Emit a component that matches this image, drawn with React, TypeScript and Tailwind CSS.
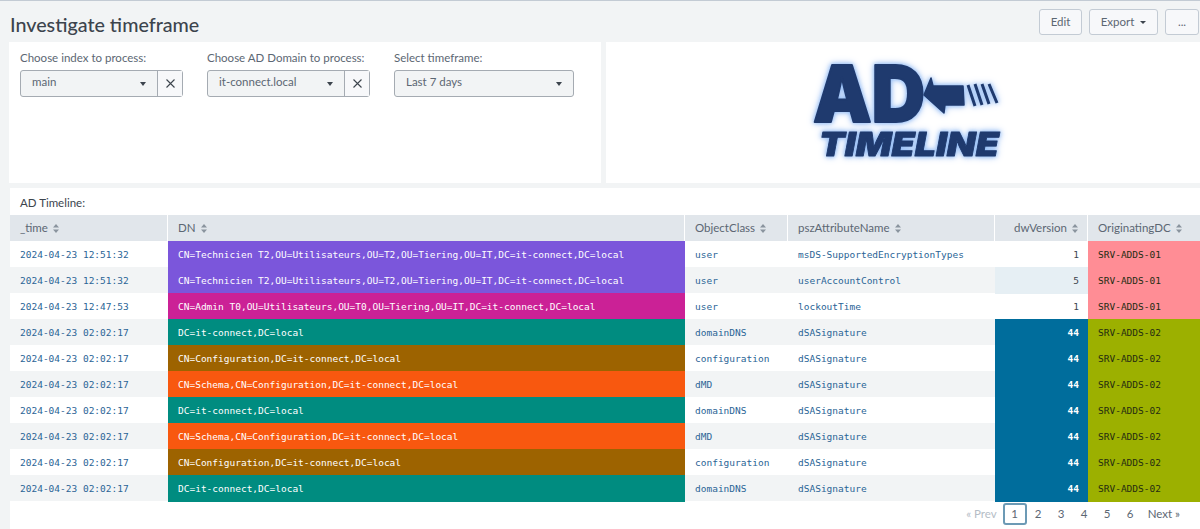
const rows = [
  { time: '2024-04-23 12:51:32', dn: 'CN=Technicien T2,OU=Utilisateurs,OU=T2,OU=Tiering,OU=IT,DC=it-connect,DC=local', dnBg: 'bg-[#7b56db]', cls: 'user', attr: 'msDS-SupportedEncryptionTypes', ver: 1, verBg: '', dc: 'SRV-ADDS-01', dcBg: 'bg-[#ff8d95]' },
  { time: '2024-04-23 12:51:32', dn: 'CN=Technicien T2,OU=Utilisateurs,OU=T2,OU=Tiering,OU=IT,DC=it-connect,DC=local', dnBg: 'bg-[#7b56db]', cls: 'user', attr: 'userAccountControl', ver: 5, verBg: 'bg-[#e6eff4]', dc: 'SRV-ADDS-01', dcBg: 'bg-[#ff8d95]' },
  { time: '2024-04-23 12:47:53', dn: 'CN=Admin T0,OU=Utilisateurs,OU=T0,OU=Tiering,OU=IT,DC=it-connect,DC=local', dnBg: 'bg-[#cb2196]', cls: 'user', attr: 'lockoutTime', ver: 1, verBg: '', dc: 'SRV-ADDS-01', dcBg: 'bg-[#ff8d95]' },
  { time: '2024-04-23 02:02:17', dn: 'DC=it-connect,DC=local', dnBg: 'bg-[#008c80]', cls: 'domainDNS', attr: 'dSASignature', ver: 44, verBg: 'bg-[#006d9c]', dc: 'SRV-ADDS-02', dcBg: 'bg-[#9cb000]' },
  { time: '2024-04-23 02:02:17', dn: 'CN=Configuration,DC=it-connect,DC=local', dnBg: 'bg-[#9d6300]', cls: 'configuration', attr: 'dSASignature', ver: 44, verBg: 'bg-[#006d9c]', dc: 'SRV-ADDS-02', dcBg: 'bg-[#9cb000]' },
  { time: '2024-04-23 02:02:17', dn: 'CN=Schema,CN=Configuration,DC=it-connect,DC=local', dnBg: 'bg-[#f8580f]', cls: 'dMD', attr: 'dSASignature', ver: 44, verBg: 'bg-[#006d9c]', dc: 'SRV-ADDS-02', dcBg: 'bg-[#9cb000]' },
  { time: '2024-04-23 02:02:17', dn: 'DC=it-connect,DC=local', dnBg: 'bg-[#008c80]', cls: 'domainDNS', attr: 'dSASignature', ver: 44, verBg: 'bg-[#006d9c]', dc: 'SRV-ADDS-02', dcBg: 'bg-[#9cb000]' },
  { time: '2024-04-23 02:02:17', dn: 'CN=Schema,CN=Configuration,DC=it-connect,DC=local', dnBg: 'bg-[#f8580f]', cls: 'dMD', attr: 'dSASignature', ver: 44, verBg: 'bg-[#006d9c]', dc: 'SRV-ADDS-02', dcBg: 'bg-[#9cb000]' },
  { time: '2024-04-23 02:02:17', dn: 'CN=Configuration,DC=it-connect,DC=local', dnBg: 'bg-[#9d6300]', cls: 'configuration', attr: 'dSASignature', ver: 44, verBg: 'bg-[#006d9c]', dc: 'SRV-ADDS-02', dcBg: 'bg-[#9cb000]' },
  { time: '2024-04-23 02:02:17', dn: 'DC=it-connect,DC=local', dnBg: 'bg-[#008c80]', cls: 'domainDNS', attr: 'dSASignature', ver: 44, verBg: 'bg-[#006d9c]', dc: 'SRV-ADDS-02', dcBg: 'bg-[#9cb000]' },
];

const gridCols = 'grid grid-cols-[158px_517px_103px_207px_93px_112px]';

function Caret() {
  return <span className="ml-[6px] inline-block h-0 w-0 border-x-[3px] border-t-[3.5px] border-x-transparent border-t-[#3c444d]" />;
}

function Sort() {
  return (
    <svg width="6" height="9" viewBox="0 0 6 9" className="ml-[5px]" fill="#8a949e">
      <path d="M3 0 6 3.4H0ZM3 9 0 5.6H6Z" />
    </svg>
  );
}

function Dropdown({ label, clear, width }: { label: string; clear?: boolean; width: string }) {
  return (
    <div className={`flex h-[27px] ${width} rounded-[3px] border border-[#a5abb2] bg-[#f2f4f5] text-[11.5px] text-[#5c6773]`}>
      <div className="flex flex-1 items-center justify-between pl-[11px] pr-[11px]">
        <span className="-mt-[3px]">{label}</span>
        <span className="inline-block h-0 w-0 border-x-[3px] border-t-[4px] border-x-transparent border-t-[#3c444d]" />
      </div>
      {clear && (
        <div className="flex w-[25px] items-center justify-center border-l border-[#a5abb2] bg-[#f7f8fa] text-[#3c444d]">
          <svg width="9" height="9" viewBox="0 0 9 9" fill="none" stroke="currentColor" strokeWidth="1.1"><path d="M0.5 0.5 8.5 8.5M8.5 0.5 0.5 8.5" /></svg>
        </div>
      )}
    </div>
  );
}

function Field({ title, className, children }: { title: string; className: string; children: React.ReactNode }) {
  return (
    <div className={className}>
      <div className="mb-[5px] text-[11.5px] leading-[15px] text-[#5c6773]">{title}</div>
      {children}
    </div>
  );
}

function Logo() {
  return (
    <svg width="205" height="120" viewBox="0 0 205 120" className="ml-[199px] mt-[8px] [filter:drop-shadow(0_0_2px_#8db9f5)_drop-shadow(0_0_3px_#b4cff7)]">
      <g fill="#1f3a6e" stroke="#1f3a6e" strokeLinejoin="round">
        <text x="8" y="72" fontFamily="Inter, sans-serif" fontWeight="900" fontSize="78" strokeWidth="2" textLength="112" lengthAdjust="spacingAndGlyphs">AD</text>
        <path d="M119 45 126 28 128 36 158 36 159 55 140 55 139 63Z" strokeWidth="1.5" />
        <path d="M163 35 170 56M170 34 177 55M177 34 184 54M184 34 192 53" fill="none" strokeWidth="3" />
        <text x="14" y="106" fontFamily="Inter, sans-serif" fontWeight="900" fontStyle="italic" fontSize="33" strokeWidth="0.8" textLength="180" lengthAdjust="spacingAndGlyphs">TIMELINE</text>
      </g>
    </svg>
  );
}

export default function App() {
  return (
    <div className="h-[529px] w-[1200px] overflow-hidden border-t border-[#c3cbd4] bg-[#f2f4f5] font-['Lato',sans-serif]">
      <div className="flex h-[41px] items-start justify-between pl-[10px] pr-[1px]">
        <h1 className="mt-[11px] text-[19.7px] font-medium leading-[25px] text-[#3c444d]">Investigate timeframe</h1>
        <div className="mt-[8px] flex gap-[7px] text-[11.5px] text-[#5c6773]">
          <div className="flex h-[26px] w-[43px] items-center justify-center rounded-[3px] border border-[#c3cbd4] bg-[#f7f8fa]">Edit</div>
          <div className="flex h-[26px] w-[69px] items-center justify-center rounded-[3px] border border-[#c3cbd4] bg-[#f7f8fa]">Export<Caret /></div>
          <div className="flex h-[26px] w-[34px] items-center justify-center rounded-[3px] border border-[#c3cbd4] bg-[#f7f8fa]">...</div>
        </div>
      </div>

      <div className="ml-[9px] flex h-[141px] gap-[5px]">
        <div className="flex w-[592px] bg-white pl-[11px] pt-[8px]">
          <Field title="Choose index to process:" className="w-[187px]">
            <Dropdown label="main" clear width="w-[163px]" />
          </Field>
          <Field title="Choose AD Domain to process:" className="w-[187px]">
            <Dropdown label="it-connect.local" clear width="w-[163px]" />
          </Field>
          <Field title="Select timeframe:" className="w-[180px]">
            <Dropdown label="Last 7 days" width="w-[180px]" />
          </Field>
        </div>
        <div className="flex-1 bg-white">
          <Logo />
        </div>
      </div>

      <div className="ml-[10px] mt-[5px] h-[341px] bg-white">
        <div className="h-[27px] pl-[10px] pt-[7px] text-[11.5px] leading-[15px] text-[#3c444d]">AD Timeline:</div>
        <div className={`${gridCols} h-[26px] text-[11.5px] text-[#5c6773]`}>
          <div className="flex items-center border-r border-white bg-[#e1e6eb] pl-[10px]">_time<Sort /></div>
          <div className="flex items-center border-r border-white bg-[#e1e6eb] pl-[10px]">DN<Sort /></div>
          <div className="flex items-center border-r border-white bg-[#e1e6eb] pl-[10px]">ObjectClass<Sort /></div>
          <div className="flex items-center border-r border-white bg-[#e1e6eb] pl-[10px]">pszAttributeName<Sort /></div>
          <div className="flex items-center justify-end border-r border-white bg-[#e1e6eb] pr-[9px]">dwVersion<Sort /></div>
          <div className="flex items-center bg-[#e1e6eb] pl-[10px]">OriginatingDC<Sort /></div>
        </div>
        {rows.map((r, i) => (
          <div key={i} className={`${gridCols} h-[26px] font-['DejaVu_Sans_Mono',monospace] text-[9.5px] leading-[27px] ${i % 2 ? 'bg-[#f2f4f5]' : 'bg-white'}`}>
            <div className="pl-[10px] text-[#2a6496]">{r.time}</div>
            <div className={`pl-[10px] text-white ${r.dnBg}`}>{r.dn}</div>
            <div className="pl-[10px] text-[#2a6496]">{r.cls}</div>
            <div className="pl-[10px] text-[#2a6496]">{r.attr}</div>
            <div className={`pr-[9px] text-right ${r.verBg} ${r.ver === 44 ? 'font-bold text-white' : 'text-[#3c444d]'}`}>{r.ver}</div>
            <div className={`pl-[10px] text-[#252c12] ${r.dcBg}`}>{r.dc}</div>
          </div>
        ))}
        <div className="flex items-center justify-end pr-[20px] pt-[2px] text-[11.5px] text-[#5c6773]">
          <span className="mr-[6px] text-[#b5bdc6]">« Prev</span>
          <span className="flex h-[22px] w-[24px] items-center justify-center rounded-[3px] border-2 border-[#6c9ab5]">1</span>
          <span className="ml-[8px] w-[7px]">2</span>
          <span className="ml-[16px] w-[7px]">3</span>
          <span className="ml-[16px] w-[7px]">4</span>
          <span className="ml-[16px] w-[7px]">5</span>
          <span className="ml-[16px] w-[7px]">6</span>
          <span className="ml-[14px]">Next »</span>
        </div>
      </div>
    </div>
  );
}
